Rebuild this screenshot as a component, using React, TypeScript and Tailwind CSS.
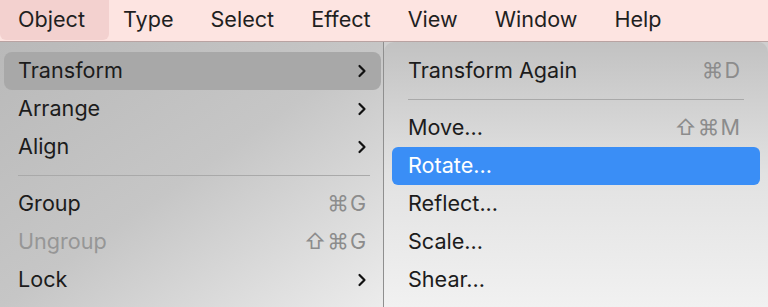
import React from "react";

type Item =
  | { sep: true }
  | {
      sep?: false;
      label: string;
      shortcut?: string;
      submenu?: boolean;
      disabled?: boolean;
      active?: boolean;
    };

const leftItems: Item[] = [
  { label: "Transform", submenu: true, active: true },
  { label: "Arrange", submenu: true },
  { label: "Align", submenu: true },
  { sep: true },
  { label: "Group", shortcut: "⌘G" },
  { label: "Ungroup", shortcut: "⇧⌘G", disabled: true },
  { label: "Lock", submenu: true },
];

const rightItems: Item[] = [
  { label: "Transform Again", shortcut: "⌘D" },
  { sep: true },
  { label: "Move...", shortcut: "⇧⌘M" },
  { label: "Rotate...", active: true },
  { label: "Reflect..." },
  { label: "Scale..." },
  { label: "Shear..." },
];

const menus = ["Type", "Select", "Effect", "View", "Window", "Help"];

const Chevron = () => (
  <svg width="10" height="14" viewBox="0 0 10 14" className="shrink-0">
    <path d="M2.5 2 L7.5 7 L2.5 12" fill="none" stroke="#111" strokeWidth="2.2" strokeLinecap="round" strokeLinejoin="round" />
  </svg>
);

const MenuList = ({ items, sub }: { items: Item[]; sub?: boolean }) => (
  <div className="flex flex-col">
    {items.map((item, i) => {
      if (item.sep) {
        return (
          <div key={i} className={`flex h-[19px] items-center ${sub ? "px-4" : "pl-[14px] pr-[11px]"}`}>
            <div className="h-px w-full bg-[#a9a9a9]" />
          </div>
        );
      }
      const bg = item.active ? (sub ? "bg-[#3a8ef6] text-white" : "bg-[#a8a8a8] text-[#1c1c1c]") : "";
      const color = item.disabled ? "text-[#969696]" : item.active ? "" : "text-[#1c1c1c]";
      return (
        <div
          key={i}
          className={`flex h-[38px] items-center justify-between ${sub ? "rounded-[6px] pl-4 pr-[19px]" : "rounded-[8px] pl-[14px] pr-[14px]"} ${bg} ${color}`}
        >
          <span>{item.label}</span>
          {item.shortcut && (
            <span className="text-[#8c8c8c] tracking-[1px]" style={{ fontFamily: "Inter, 'DejaVu Sans', sans-serif" }}>
              {item.shortcut}
            </span>
          )}
          {item.submenu && <Chevron />}
        </div>
      );
    })}
  </div>
);

export default function App() {
  return (
    <div
      className="flex h-[307px] w-[768px] flex-col overflow-hidden bg-[#cfcfcf] text-[21.6px] leading-none"
      style={{ fontFamily: "Inter, 'Noto Sans', sans-serif" }}
    >
      <div className="flex h-[42px] shrink-0 items-stretch border-b border-[#b9a3a2] bg-[#fde4e1] pb-[1px] text-[#1f1f1f]">
        <div className="flex items-center rounded-b-[6px] bg-[#f3d1cf] pl-[18px] pr-[24px]">Object</div>
        <div className="ml-[14px] flex items-center gap-[37px]">
          {menus.map((m) => (
            <span key={m}>{m}</span>
          ))}
        </div>
      </div>
      <div className="flex flex-1">
        <div className="w-[384px] border-r border-[#8f8f8f] bg-gradient-to-br from-[#b9b9b9] via-[#c6c6c6] to-[#ececec] pl-[4px] pr-[2px] pt-[10px]">
          <MenuList items={leftItems} />
        </div>
        <div className="flex-1 rounded-t-[10px] bg-gradient-to-b from-[#c2c2c2] via-[#e2e2e2] to-[#f1f1f1] px-[8px] pt-[10px]">
          <MenuList items={rightItems} sub />
        </div>
      </div>
    </div>
  );
}
